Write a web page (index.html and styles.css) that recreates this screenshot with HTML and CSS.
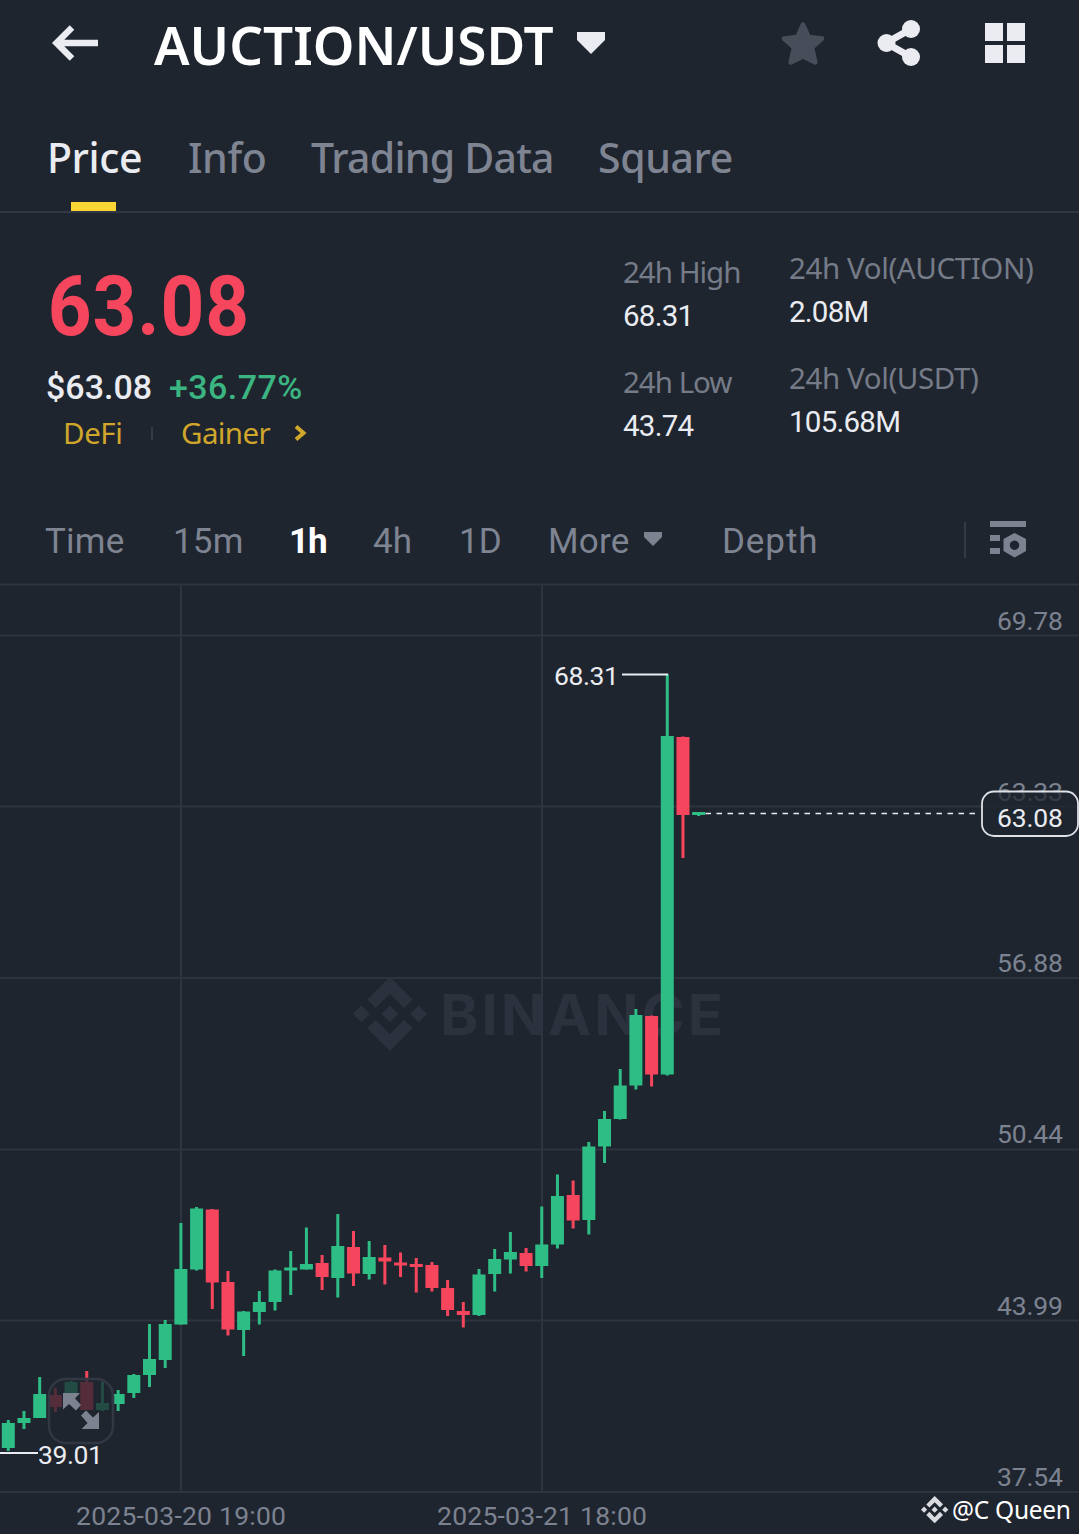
FILE: index.html
```html
<!DOCTYPE html>
<html lang="en">
<head>
  <meta charset="UTF-8" />
  <meta name="viewport" content="width=device-width, initial-scale=1.0"/>
  <title>AUCTION/USDT</title>
  <link rel="stylesheet" href="styles.css">
</head>
<body>
  <header class="header">
    <svg class="back" width="46" height="36" viewBox="0 0 46 36">
      <path d="M20 2.500L4.500 18 20 33.500M4.500 18H46" fill="none" stroke="#eaecf1" stroke-width="6.4"/>
    </svg>
    <h1 class="pair">AUCTION/USDT</h1>
    <svg class="caret" width="28" height="22" viewBox="0 0 28 22"><path d="M0 0h28v8L14 22 0 8z" fill="#eaecf1"/></svg>
    <div class="actions">
      <svg width="46" height="48" viewBox="0 0 46 48">
        <path d="M24 5.500l5.600 12.500 13.500 1.500L33 28.500l3.400 15L24 37.500l-12.400 6L15 28.500 4.900 19.500 18.400 18z" fill="#474d59" stroke="#474d59" stroke-width="4.500" stroke-linejoin="round"/>
      </svg>
      <svg width="44" height="46" viewBox="0 0 44 46">
        <path d="M34 9L9 23l25 14" fill="none" stroke="#eaecf1" stroke-width="7"/>
        <circle cx="34" cy="9" r="9" fill="#eaecf1"/>
        <circle cx="9.500" cy="23" r="9" fill="#eaecf1"/>
        <circle cx="34" cy="37" r="9" fill="#eaecf1"/>
      </svg>
      <svg width="40" height="40" viewBox="0 0 40 40">
        <path d="M0 0h18v18H0zM22 0h18v18H22zM0 22h18v18H0zM22 22h18v18H22z" fill="#eaecf1"/>
      </svg>
    </div>
  </header>

  <nav class="tabs">
    <a class="tab active">Price</a>
    <a class="tab info">Info</a>
    <a class="tab data">Trading Data</a>
    <a class="tab square">Square</a>
  </nav>

  <section class="summary">
    <div class="quote">
      <div class="last">63.08</div>
      <div class="change"><span class="usd">$63.08</span><span class="pct">+36.77%</span></div>
      <div class="tags">
        <span class="defi">DeFi</span>
        <i class="tag-sep"></i>
        <span class="gainer">Gainer</span>
        <svg width="13" height="16" viewBox="0 0 13 16"><path d="M2 1.500L9.500 8 2 14.500" fill="none" stroke="#d0a62b" stroke-width="4"/></svg>
      </div>
    </div>
    <dl class="stats high-low">
      <dt>24h High</dt><dd>68.31</dd>
      <dt>24h Low</dt><dd>43.74</dd>
    </dl>
    <dl class="stats volume">
      <dt>24h Vol(AUCTION)</dt><dd>2.08M</dd>
      <dt>24h Vol(USDT)</dt><dd>105.68M</dd>
    </dl>
  </section>

  <nav class="intervals">
    <a>Time</a>
    <a>15m</a>
    <a class="active">1h</a>
    <a>4h</a>
    <a>1D</a>
    <a class="more">More <svg width="18" height="14" viewBox="0 0 18 14"><path d="M0 0h18v5l-9 9-9-9z" fill="#7c828f"/></svg></a>
    <a class="depth">Depth</a>
    <i class="divider"></i>
    <svg class="settings" width="36" height="38" viewBox="0 0 36 38">
      <path d="M0 0h36v6H0zM0 14h10v6H0zM0 27h10v6H0z" fill="#7c828f"/>
      <path fill-rule="evenodd" d="M24.500 12L36 18v12L24.500 36.500 13.500 30V18zM24.500 19.500a4.700 4.700 0 1 0 .01 0z" fill="#7c828f"/>
    </svg>
  </nav>

  <svg class="chart" width="1079" height="951" viewBox="0 583 1079 951">
    <defs>
      <path id="logo" d="M16.624 13.9202l2.7175 2.7154-7.353 7.353-7.353-7.352 2.7175-2.7164 4.6355 4.6595 4.6356-4.6595zm4.6366-4.6366L24 12l-2.7154 2.7164L18.5682 12l2.6924-2.7164zm-9.272.001l2.7163 2.6914-2.7164 2.7174v-.001L9.2721 12l2.7164-2.7154zm-9.2722-.001L5.4088 12l-2.6914 2.6924L0 12l2.7164-2.7164zM11.9885.0115l7.353 7.329-2.7174 2.7154-4.6356-4.6356-4.6355 4.6595-2.7174-2.7154 7.353-7.353z"/>
    </defs>

    <g class="watermark">
      <use href="#logo" transform="translate(353 977) scale(3.08)"/>
      <text x="440" y="1035" textLength="286" lengthAdjust="spacingAndGlyphs">BINANCE</text>
    </g>

    <path class="grid" d="M0 584.500H1079M0 635.500H1079M0 806.500H1079M0 978H1079M0 1149.500H1079M0 1320.500H1079M0 1492H1079M181 584V1492M542 584V1492"/>

    <g class="axis">
      <text x="997" y="630" textLength="66">69.78</text>
      <text x="997" y="801" textLength="66">63.33</text>
      <text x="997" y="972" textLength="66">56.88</text>
      <text x="997" y="1143" textLength="66">50.44</text>
      <text x="997" y="1315" textLength="66">43.99</text>
      <text x="997" y="1486" textLength="66">37.54</text>
      <text x="76" y="1525" textLength="210">2025-03-20 19:00</text>
      <text x="437" y="1525" textLength="210">2025-03-21 18:00</text>
    </g>

    <g id="candles"></g>

    <g class="mark">
      <path d="M622 674.500H668M0 1453H38"/>
      <text x="554" y="685" textLength="65">68.31</text>
      <text x="38" y="1464" textLength="65">39.01</text>
    </g>

    <path class="last-line" d="M705.500 813.500H977"/>
    <rect class="last-box" x="982" y="791.500" width="96" height="44.500" rx="12"/>
    <text class="last-text" x="997" y="827" textLength="66">63.08</text>

    <rect class="expand" x="49" y="1379" width="64" height="64" rx="17"/>
    <path class="arrows" d="M63 1393H80L75 1398.500 81 1405 76 1410.500 69 1404 63 1409.500zM99 1429H81.500L87.500 1423 81 1415.500 86 1410.500 93 1417.500 99 1412z"/>

    <g class="credit">
      <use href="#logo" transform="translate(921 1496) scale(1.14)"/>
      <text x="952" y="1519" textLength="119">@C Queen</text>
    </g>
  </svg>

  <script src="chart.js"></script>
</body>
</html>
```

FILE: styles.css
```css
body {
  margin: 0;
  width: 1079px;
  height: 1534px;
  overflow: hidden;
  background: #1f252f;
  color: #eaecf1;
  font-family: "Noto Sans", sans-serif;
}
svg {
  display: block;
  flex: none;
}
.header {
  display: flex;
  align-items: center;
  height: 86px;
  padding: 0 54px 0 52px;
}
.pair {
  margin: 0 0 0 56px;
  padding-top: 4px;
  width: 423px;
  font-size: 53px;
  font-weight: 600;
  line-height: 70px;
  color: #fff;
  white-space: nowrap;
}
.actions {
  display: flex;
  align-items: center;
  margin-left: auto;
}
.actions svg + svg {
  margin-left: 52px;
}
.actions svg:last-child {
  margin-left: 64px;
}

.tabs {
  display: flex;
  height: 79px;
  padding: 46px 0 0 47px;
  border-bottom: 2px solid #323843;
  font-size: 41px;
  font-weight: 500;
  line-height: 50px;
  letter-spacing: -0.4px;
  color: #7e8491;
}
.tab {
  white-space: nowrap;
  width: 141px;
}
.tab.info {
  width: 123px;
}
.tab.data {
  width: 287px;
  letter-spacing: -0.75px;
}
.tab.active {
  position: relative;
  color: #eaecf1;
}
.tab.active::after {
  content: "";
  position: absolute;
  left: 24px;
  bottom: 0;
  width: 45px;
  height: 9px;
  background: #fcd535;
}

.summary {
  display: flex;
  height: 286px;
  padding-left: 46px;
}
.quote {
  width: 577px;
  padding-top: 54px;
}
.last {
  padding-left: 2px;
  font-family: Roboto, sans-serif;
  font-size: 84px;
  font-weight: 700;
  line-height: 80px;
  color: #f6465d;
  letter-spacing: 1px;
  transform: scaleX(0.91);
  transform-origin: left;
}
.change {
  margin-top: 15px;
  display: flex;
  font-family: Roboto, sans-serif;
  font-size: 34px;
  font-weight: 500;
  line-height: 50px;
}
.usd {
  width: 123px;
}
.pct {
  color: #3bb582;
  letter-spacing: 0.45px;
}
.tags {
  display: flex;
  align-items: center;
  padding-left: 17px;
  font-size: 29.5px;
  line-height: 42px;
  letter-spacing: -0.4px;
  color: #d0a62b;
}
.defi {
  width: 88px;
}
.tag-sep {
  width: 2px;
  height: 13px;
  margin-right: 28px;
  background: #343a45;
}
.gainer {
  width: 113px;
  letter-spacing: -0.6px;
}
.stats {
  margin: 0;
  padding-top: 38px;
}
.high-low {
  width: 166px;
}
.volume {
  padding-top: 34px;
}
.stats dt {
  font-size: 29.5px;
  line-height: 42px;
  letter-spacing: -0.4px;
  color: #757b87;
  white-space: nowrap;
}
.high-low dt {
  letter-spacing: -1px;
}
.stats dd {
  margin: 0 0 22px;
  font-family: Roboto, sans-serif;
  font-size: 29.5px;
  line-height: 46px;
  letter-spacing: -0.75px;
}

.intervals {
  display: grid;
  grid-template-columns: 128px 116px 84px 86px 89px 174px 242px 26px 36px;
  align-items: center;
  height: 84px;
  padding-left: 45px;
  font-family: Roboto, sans-serif;
  font-size: 35px;
  letter-spacing: 0.2px;
  color: #7e8491;
}
.intervals .active {
  font-weight: 700;
  letter-spacing: -1px;
  color: #fff;
}
.more {
  display: flex;
  align-items: center;
  justify-content: space-between;
  width: 114px;
}
.more svg {
  margin-bottom: 5px;
}
.depth {
  letter-spacing: 0.9px;
}
.divider,
.settings {
  margin-bottom: 2px;
}
.divider {
  width: 2px;
  height: 36px;
  background: #343a45;
}

.chart text {
  font-family: Roboto, sans-serif;
  font-size: 26.5px;
}
.chart .watermark {
  fill: #2c323d;
}
.chart .watermark text {
  font-family: Inter, sans-serif;
  font-size: 56px;
  font-weight: 700;
  letter-spacing: 3px;
}
.grid {
  stroke: #2e343f;
  stroke-width: 2;
}
.axis {
  fill: #7c828f;
}
.up {
  fill: #2ebd85;
}
.down {
  fill: #f6465d;
}
.mark {
  fill: #eaecf1;
}
.mark path {
  stroke: #eaecf1;
  stroke-width: 2;
}
.last-line {
  stroke: #eaecf1;
  stroke-width: 1.6;
  stroke-dasharray: 5.5 5.5;
}
.last-box {
  fill: #1f252f;
  fill-opacity: 0.75;
  stroke: #dfe1e6;
  stroke-width: 1.8;
}
.last-text {
  fill: #eaecf1;
}
.expand {
  fill: #1f252f;
  fill-opacity: 0.75;
  stroke: #323843;
  stroke-width: 2.5;
}
.arrows {
  fill: #7c828f;
}
.credit {
  fill: #d9dbe0;
}
.chart .credit text {
  font-family: "Noto Sans", sans-serif;
  font-size: 24.5px;
  fill: #fff;
}
```

FILE: chart.js
```js
// direction, high, body top, body bottom, low
const candles = [
  ["up", 1420, 1423, 1448, 1451],
  ["up", 1411, 1418, 1423, 1429],
  ["up", 1377, 1394, 1418, 1418],
  ["down", 1388, 1395, 1407, 1412],
  ["up", 1381, 1382, 1395, 1400],
  ["down", 1371, 1382, 1410, 1410],
  ["up", 1382, 1403, 1410, 1411],
  ["up", 1390, 1394, 1404, 1411],
  ["up", 1374, 1375, 1393, 1398],
  ["up", 1324, 1359, 1375, 1387],
  ["up", 1320, 1324, 1360, 1368],
  ["up", 1223, 1269, 1324.5, 1324.5],
  ["up", 1207, 1208.5, 1269.5, 1270.5],
  ["down", 1209, 1209.5, 1282.5, 1309],
  ["down", 1271, 1282, 1329.5, 1335.5],
  ["up", 1311, 1311.5, 1330, 1356],
  ["up", 1291, 1302, 1312, 1324.5],
  ["up", 1269.5, 1270.5, 1302, 1310.5],
  ["up", 1251, 1267.5, 1270.5, 1295],
  ["up", 1227.5, 1264, 1269.5, 1269.5],
  ["down", 1255, 1263, 1277, 1290],
  ["up", 1214, 1246, 1278, 1297.5],
  ["down", 1231, 1247, 1273.5, 1286],
  ["up", 1241, 1257, 1274, 1279.5],
  ["down", 1245, 1257.5, 1261.5, 1284.5],
  ["down", 1252.5, 1262.5, 1265.5, 1277],
  ["down", 1258, 1264, 1267, 1292.5],
  ["down", 1262, 1265, 1288, 1291.5],
  ["down", 1280, 1288, 1310, 1316],
  ["down", 1302, 1311, 1315, 1327.5],
  ["up", 1269, 1274.5, 1315, 1316],
  ["up", 1249, 1259, 1274, 1291.5],
  ["up", 1232, 1252, 1259.5, 1273.5],
  ["down", 1248, 1253, 1266, 1271.5],
  ["up", 1206.5, 1244.5, 1266, 1278],
  ["up", 1174.5, 1196, 1244.5, 1248.5],
  ["down", 1180.5, 1195, 1220.5, 1228.5],
  ["up", 1142, 1146.5, 1220, 1234.5],
  ["up", 1111, 1119, 1146.5, 1163],
  ["up", 1069, 1085.5, 1119, 1119.5],
  ["up", 1009, 1015, 1085.5, 1089.5],
  ["down", 1015.5, 1016, 1074.5, 1086.5],
  ["up", 674, 736, 1074.5, 1075.5],
  ["down", 736.5, 737, 815, 858],
  ["up", 812, 812, 815, 816]
];

const NS = "http://www.w3.org/2000/svg";
const group = document.getElementById("candles");

function bar(cls, x, y, width, height) {
  const rect = document.createElementNS(NS, "rect");
  rect.setAttribute("class", cls);
  rect.setAttribute("x", x);
  rect.setAttribute("y", y);
  rect.setAttribute("width", width);
  rect.setAttribute("height", height);
  group.appendChild(rect);
}

candles.forEach(([cls, high, top, bottom, low], i) => {
  const x = 8.3 + i * 15.69;
  bar(cls, x - 1.5, high, 3, low - high);
  bar(cls, x - 6.5, top, 13, bottom - top);
});
```
